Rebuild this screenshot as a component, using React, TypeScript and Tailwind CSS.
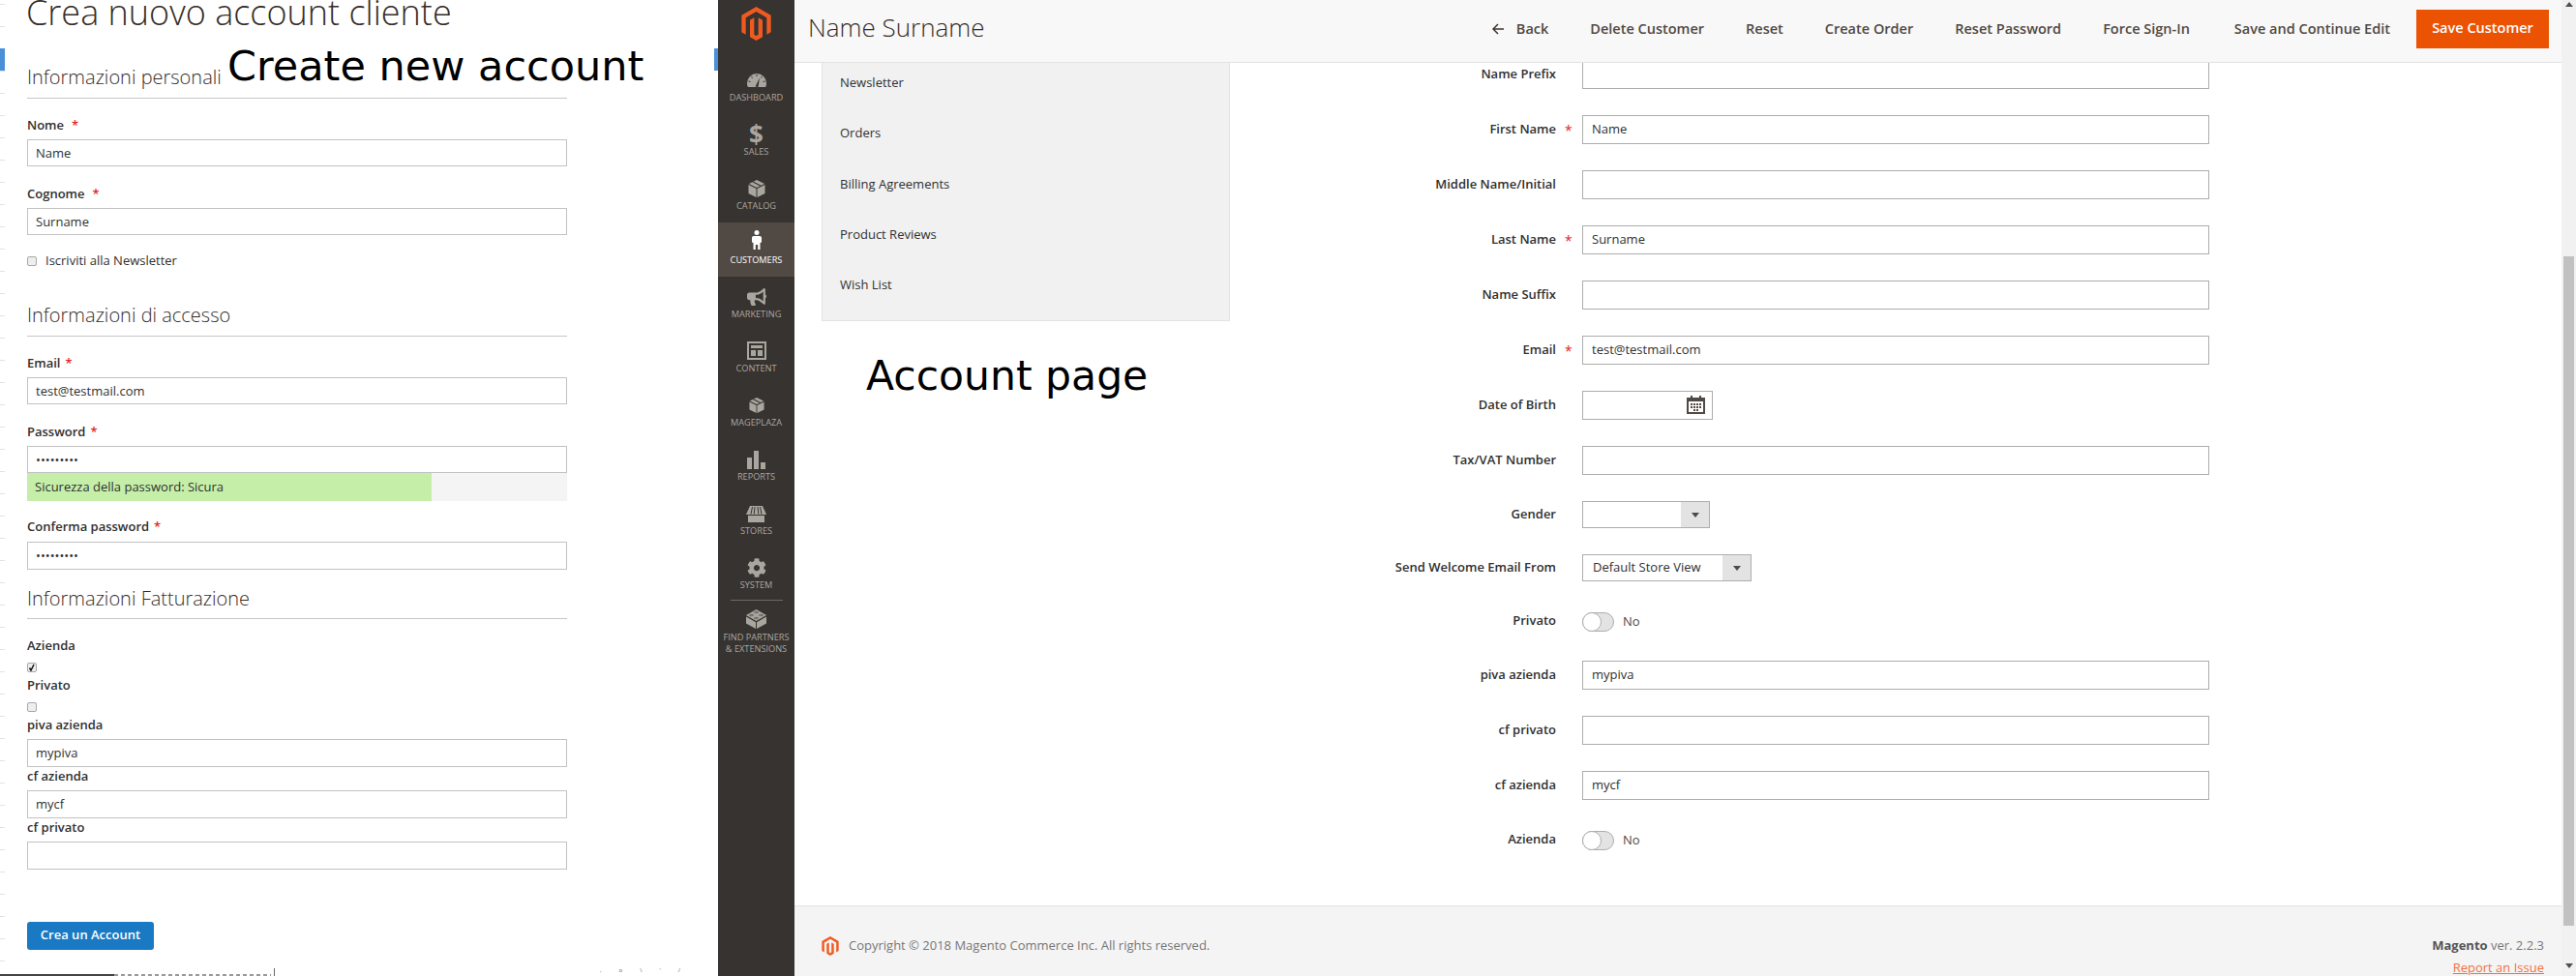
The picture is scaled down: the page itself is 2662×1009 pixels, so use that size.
import type { ReactNode } from 'react'
import { FaBullhorn, FaCog } from 'react-icons/fa'

const MAGENTO_PATH =
  'M12 24l-4.455-2.572v-12l2.97-1.715v12.001l1.485.902 1.485-.902V7.713l2.97 1.715v12L12 24zM22.391 6v12l-2.969 1.714V7.713L12 3.43 4.574 7.713v12L1.609 18V6L12 0l10.391 6z'

function MagentoLogo({ className }: { className: string }) {
  return (
    <svg viewBox="1.6 0 20.8 24" className={className}>
      <path d={MAGENTO_PATH} fill="currentColor" />
    </svg>
  )
}

function BoxIcon({ className }: { className: string }) {
  return (
    <svg viewBox="0 0 18 18" className={className}>
      <path d="M9 0l8 4-8 4-8-4z" fill="#a9a59f" />
      <path d="M5 2l8 4" stroke="#373330" strokeWidth="1.2" />
      <path d="M.5 5l8 4v9l-8-4z" fill="#a9a59f" />
      <path d="M17.500 5l-8 4v9l8-4z" fill="#a9a59f" />
    </svg>
  )
}

function GaugeIcon() {
  return (
    <svg viewBox="0 0 20 14" className="w-5 h-[14px]">
      <path d="M10 0A10 10 0 0 0 0 10c0 1.500.3 3 1 4h18c.7-1 1-2.500 1-4A10 10 0 0 0 10 0z" fill="#a9a59f" />
      <path d="M10 1v2M4.500 3l1 1.500M1.500 8l2 .5M15.500 3l-1 1.500M18.500 8l-2 .5" stroke="#373330" />
      <path d="M8.500 13.500L13 4.500l-1.500 9.500z" fill="#373330" />
    </svg>
  )
}

function PersonIcon() {
  return (
    <svg viewBox="0 0 10 20" className="-mt-[6px] w-[10px] h-5">
      <circle cx="5" cy="2.500" r="2.500" fill="#fff" />
      <path d="M2 6h6c1.200 0 2 .8 2 2v4.500L8.500 13v7H6.200v-5H3.800v5H1.500v-7L0 12.500V8c0-1.200.8-2 2-2z" fill="#fff" />
    </svg>
  )
}

function ContentIcon() {
  return (
    <svg viewBox="0 0 20 19" className="-mt-[2px] w-5 h-[19px]">
      <path d="M0 0h20v19H0zM2 2v15h16V2z" fill="#a9a59f" fillRule="evenodd" />
      <path d="M4 4h12v3H4zM4 9h5v6H4zM11 9h5v6h-5z" fill="#a9a59f" />
    </svg>
  )
}

function ReportsIcon() {
  return (
    <svg viewBox="0 0 19 19" className="w-[19px] h-[19px]">
      <path d="M0 7h5v12H0zM7 0h5v19H7zM14 12h5v7h-5z" fill="#a9a59f" />
    </svg>
  )
}

function StoreIcon() {
  return (
    <svg viewBox="0 0 21 17" className="w-[21px] h-[17px]">
      <path d="M4 0h13l4 9H0z" fill="#a9a59f" />
      <path d="M6.500 1L5 8.500M9 1l-.8 7.500M12 1l.8 7.500M14.500 1L16 8.500" stroke="#373330" strokeWidth="1" />
      <path d="M2 10h17v7H2z" fill="#a9a59f" />
    </svg>
  )
}

function BrickIcon() {
  return (
    <svg viewBox="0 0 21 20" className="w-[21px] h-5">
      <path d="M10.500 0L21 6l-10.500 6L0 6z" fill="#a9a59f" />
      <path d="M0 7.500l10 5.700V20L0 14.500zM21 7.500l-10 5.700V20l10-5.500z" fill="#a9a59f" />
      <ellipse cx="10.500" cy="3" rx="2.500" ry="1.200" fill="#373330" opacity=".45" />
      <ellipse cx="5.500" cy="6" rx="2.500" ry="1.200" fill="#373330" opacity=".45" />
      <ellipse cx="15.500" cy="6" rx="2.500" ry="1.200" fill="#373330" opacity=".45" />
      <ellipse cx="10.500" cy="9" rx="2.500" ry="1.200" fill="#373330" opacity=".45" />
    </svg>
  )
}

function CalendarIcon() {
  return (
    <svg viewBox="0 0 19 19" className="-mt-[2px] w-[19px] h-[19px]">
      <path d="M0 2h19v17H0z" fill="#514943" />
      <path d="M2 6h15v11H2z" fill="#fff" />
      <path d="M4 0h2v3H4zM13 0h2v3h-2z" fill="#514943" />
      <path d="M4 8h2v2H4zM7 8h2v2H7zM10 8h2v2h-2zM13 8h2v2h-2zM4 11h2v2H4zM7 11h2v2H7zM10 11h2v2h-2zM13 11h2v2h-2zM7 14h2v2H7zM10 14h2v2h-2z" fill="#514943" />
    </svg>
  )
}

const menu: { label: string; icon: ReactNode; active?: boolean }[] = [
  { label: 'Dashboard', icon: <GaugeIcon /> },
  { label: 'Sales', icon: <span className="text-[26px] font-bold leading-none text-[#a9a59f]">$</span> },
  { label: 'Catalog', icon: <BoxIcon className="w-[18px] h-[18px]" /> },
  { label: 'Customers', icon: <PersonIcon />, active: true },
  { label: 'Marketing', icon: <FaBullhorn className="w-5 h-[18px] text-[#a9a59f]" /> },
  { label: 'Content', icon: <ContentIcon /> },
  { label: 'Mageplaza', icon: <BoxIcon className="w-[16px] h-[16px]" /> },
  { label: 'Reports', icon: <ReportsIcon /> },
  { label: 'Stores', icon: <StoreIcon /> },
  { label: 'System', icon: <FaCog className="w-5 h-5 text-[#a9a59f]" /> },
]

function Star({ className = 'ml-[5px]' }: { className?: string }) {
  return <span className={`${className} text-[#e22626]`}>*</span>
}

function FieldLabel({ children, className }: { children: ReactNode; className: string }) {
  return <div className={`${className} text-[13px] font-semibold text-[#303030]`}>{children}</div>
}

function TextBox({ value = '', type = 'text', className }: { value?: string; type?: string; className: string }) {
  return (
    <input
      readOnly
      type={type}
      value={value}
      className={`${className} block w-[558px] border border-[#c2c2c2] bg-white px-2 pb-px text-[13px] text-[#303030] outline-none`}
    />
  )
}

function SectionTitle({ children, className }: { children: ReactNode; className: string }) {
  return (
    <div className={`${className} border-b border-[#c6c6c6] w-[558px] text-[20px] leading-[24px] font-light text-[#362d27]`}>
      {children}
    </div>
  )
}

function Check({ checked, className }: { checked?: boolean; className: string }) {
  return (
    <div className={`${className} w-[10px] h-[10px] rounded-[2px] border border-[#a8a8a8] bg-[#eeeeee] flex items-center justify-center`}>
      {checked && (
        <svg viewBox="0 0 8 8" className="w-2 h-2">
          <path d="M1.500 4.500L3 7l3-6" stroke="#111" strokeWidth="1.500" fill="none" />
        </svg>
      )}
    </div>
  )
}

function CreateAccount() {
  return (
    <div className="relative w-[742px] shrink-0 overflow-hidden bg-white pl-[28px]">
      <div className="absolute left-0 top-0 bottom-0 w-[5px] bg-[repeating-linear-gradient(to_bottom,transparent_0,transparent_4px,#e2e2e2_4px,#e2e2e2_5px,transparent_5px,transparent_23px)]" />
      <div className="absolute left-0 top-[50px] w-[5px] h-[23px] bg-[#4a90d9]" />
      <div className="absolute right-0 top-[50px] w-[4px] h-[23px] bg-[#4a90d9]" />

      <h1 className="-ml-px text-[36px] leading-[26px] font-light text-[#362d27] whitespace-nowrap">Crea nuovo account cliente</h1>
      <SectionTitle className="mt-[42px] pb-[9px]">Informazioni personali</SectionTitle>
      <div className="absolute left-[235px] top-[38px] text-[43px] leading-[60px] text-black font-['DejaVu_Sans',sans-serif]">Create new account</div>

      <FieldLabel className="mt-[17px] h-5 leading-5">Nome<Star className="ml-2" /></FieldLabel>
      <TextBox className="mt-[5px] h-[28px]" value="Name" />
      <FieldLabel className="mt-[18px] h-5 leading-5">Cognome<Star className="ml-2" /></FieldLabel>
      <TextBox className="mt-[5px] h-[28px]" value="Surname" />
      <div className="mt-[17px] h-5 flex items-center">
        <Check className="" />
        <span className="ml-[9px] text-[13px] text-[#303030]">Iscriviti alla Newsletter</span>
      </div>

      <SectionTitle className="mt-[34px] pb-[9px]">Informazioni di accesso</SectionTitle>
      <FieldLabel className="mt-[17px] h-5 leading-5">Email<Star /></FieldLabel>
      <TextBox className="mt-[5px] h-[28px]" value="test@testmail.com" />
      <FieldLabel className="mt-[18px] h-5 leading-5">Password<Star /></FieldLabel>
      <TextBox className="mt-[5px] h-[28px]" type="password" value="123456789" />
      <div className="w-[558px] h-[29px] bg-[#f4f4f4]">
        <div className="w-[418px] h-full bg-[#c5efa9] pl-2 text-[13px] leading-[28px] text-[#303030]">Sicurezza della password: Sicura</div>
      </div>
      <FieldLabel className="mt-[16px] h-5 leading-5">Conferma password<Star /></FieldLabel>
      <TextBox className="mt-[6px] h-[29px]" type="password" value="123456789" />

      <SectionTitle className="mt-[18px] pb-[8px]">Informazioni Fatturazione</SectionTitle>
      <FieldLabel className="mt-[17px] h-5 leading-5">Azienda</FieldLabel>
      <Check className="mt-[8px]" checked />
      <FieldLabel className="mt-[3px] h-5 leading-5">Privato</FieldLabel>
      <Check className="mt-[8px]" />
      <FieldLabel className="mt-[3px] h-5 leading-5">piva azienda</FieldLabel>
      <TextBox className="mt-[5px] h-[29px]" value="mypiva" />
      <FieldLabel className="h-[18px] leading-[18px]">cf azienda</FieldLabel>
      <TextBox className="mt-[6px] h-[29px]" value="mycf" />
      <FieldLabel className="h-[18px] leading-[18px]">cf privato</FieldLabel>
      <TextBox className="mt-[6px] h-[29px]" />
      <button className="mt-[54px] block h-[29px] w-[131px] rounded-[3px] bg-[#1979c3] pb-[2px] text-[13px] font-semibold text-white">Crea un Account</button>

      <div className="absolute left-0 bottom-0 w-[118px] h-[2px] bg-[#444444]" />
      <div className="absolute left-[118px] bottom-0 w-[162px] h-[2px] bg-[repeating-linear-gradient(to_right,#999999_0,#999999_4px,transparent_4px,transparent_7px)]" />
      <div className="absolute left-[283px] bottom-0 w-px h-2 bg-[#666666]" />
      <div className="absolute left-[620px] bottom-[3px] flex gap-[18px] text-[6px] leading-none text-[#666666]">
        <span>,</span><span>o</span><span>\</span><span>'</span><span>/</span>
      </div>
    </div>
  )
}

function Sidebar() {
  return (
    <aside className="w-[79px] shrink-0 bg-[#373330]">
      <div className="h-[62px] pt-[7px] flex justify-center">
        <MagentoLogo className="w-[31px] h-[35px] text-[#f05a1f]" />
      </div>
      {menu.map((item) => (
        <div key={item.label} className={`h-14 pt-[10px] flex flex-col items-center ${item.active ? 'bg-[#514943] text-white' : 'text-[#aaa6a0]'}`}>
          <div className="h-[22px] flex items-center justify-center">{item.icon}</div>
          <div className="mt-px text-[9.2px] leading-[12px] uppercase whitespace-nowrap">{item.label}</div>
        </div>
      ))}
      <div className="-mt-[2px] mx-auto w-[54px] h-px bg-[#6f6a65]" />
      <div className="pt-[9px] flex flex-col items-center text-[#aaa6a0]">
        <BrickIcon />
        <div className="mt-[3px] text-[9.2px] leading-[12px] uppercase text-center whitespace-nowrap">Find Partners<br />&amp; Extensions</div>
      </div>
    </aside>
  )
}

function FormRow({ label, required, height = 'h-[30px]', children }: { label: string; required?: boolean; height?: string; children: ReactNode }) {
  return (
    <div className={`${height} flex items-center`}>
      <div className="-mt-px w-[337px] text-right text-[13px] font-semibold text-[#303030] whitespace-nowrap">{label}</div>
      <div className="w-[27px] pl-[9px] text-[14px] text-[#e22626]">{required ? '*' : ''}</div>
      {children}
    </div>
  )
}

function FormInput({ value = '' }: { value?: string }) {
  return (
    <input
      readOnly
      value={value}
      className="w-[648px] h-[30px] border border-[#adadad] bg-white px-[9px] pb-[2px] text-[13px] text-[#303030] outline-none"
    />
  )
}

function SelectBox({ width, value }: { width: string; value?: string }) {
  return (
    <div className={`${width} h-[28px] border border-[#adadad] bg-white flex`}>
      <div className="flex-1 pl-[10px] text-[13px] leading-[25px] text-[#303030] whitespace-nowrap">{value}</div>
      <div className="w-[29px] bg-[#e3e3e3] flex items-center justify-center">
        <div className="w-0 h-0 border-x-[4px] border-x-transparent border-t-[5px] border-t-[#514943]" />
      </div>
    </div>
  )
}

function Toggle() {
  return (
    <div className="mt-[2px] flex items-center">
      <div className="relative w-[33px] h-5 rounded-full border border-[#adadad] bg-[#e3e3e3]">
        <div className="absolute -left-px -top-px w-5 h-5 rounded-full border border-[#adadad] bg-white" />
      </div>
      <span className="ml-[9px] text-[13px] text-[#514943]">No</span>
    </div>
  )
}

const sideLinks = ['Newsletter', 'Orders', 'Billing Agreements', 'Product Reviews', 'Wish List']

function AccountPage() {
  return (
    <div className="flex-1 flex min-w-0">
      <div className="flex-1 flex flex-col min-w-0">
        <header className="relative z-10 h-[65px] shrink-0 border-b border-[#e3e3e3] bg-[#f8f8f8] pl-[14px] pr-[13px] flex items-center">
          <h2 className="-mt-[8px] text-[26px] font-light text-[#362d27]">Name Surname</h2>
          <div className="-mt-[5px] ml-auto flex items-center gap-[43px] text-[14.500px] font-semibold text-[#514943]">
            <span className="flex items-center gap-[13px]">
              <svg viewBox="0 0 12 12" className="w-3 h-3">
                <path d="M6 1L1 6l5 5M1 6h11" stroke="#41362f" strokeWidth="1.500" fill="none" />
              </svg>
              Back
            </span>
            <span>Delete Customer</span>
            <span>Reset</span>
            <span>Create Order</span>
            <span>Reset Password</span>
            <span>Force Sign-In</span>
            <span className="ml-[3px] -mr-[16px]">Save and Continue Edit</span>
            <button className="h-10 w-[137px] bg-[#eb5202] pb-px text-white font-semibold">Save Customer</button>
          </div>
        </header>
        <div className="relative flex-1 flex min-h-0">
          <div className="absolute left-[74px] top-[301px] text-[42.500px] leading-[46px] text-black font-['DejaVu_Sans',sans-serif]">Account page</div>
          <nav className="ml-[28px] w-[422px] h-[267px] border-x border-b border-[#e3e3e3] bg-[#f1f1f1] pl-[18px] pt-[9px]">
            {sideLinks.map((link) => (
              <div key={link} className="h-[52.300px] leading-[22px] text-[13px] text-[#303030]">{link}</div>
            ))}
          </nav>
          <div className="-mt-[3px] flex flex-col gap-[27px]">
            <FormRow label="Name Prefix"><FormInput /></FormRow>
            <FormRow label="First Name" required><FormInput value="Name" /></FormRow>
            <FormRow label="Middle Name/Initial"><FormInput /></FormRow>
            <FormRow label="Last Name" required><FormInput value="Surname" /></FormRow>
            <FormRow label="Name Suffix"><FormInput /></FormRow>
            <FormRow label="Email" required><FormInput value="test@testmail.com" /></FormRow>
            <FormRow label="Date of Birth">
              <div className="w-[135px] h-[30px] border border-[#adadad] bg-white flex items-center justify-end pr-[7px]">
                <CalendarIcon />
              </div>
            </FormRow>
            <FormRow label="Tax/VAT Number"><FormInput /></FormRow>
            <FormRow label="Gender" height="h-[28px]"><SelectBox width="w-[132px]" /></FormRow>
            <FormRow label="Send Welcome Email From" height="h-[28px]"><SelectBox width="w-[175px]" value="Default Store View" /></FormRow>
            <FormRow label="Privato" height="h-[28px]"><Toggle /></FormRow>
            <FormRow label="piva azienda"><FormInput value="mypiva" /></FormRow>
            <FormRow label="cf privato"><FormInput /></FormRow>
            <FormRow label="cf azienda"><FormInput value="mycf" /></FormRow>
            <FormRow label="Azienda" height="h-[28px]"><Toggle /></FormRow>
          </div>
        </div>
        <footer className="h-[73px] shrink-0 border-t border-[#e3e3e3] bg-[#f4f4f4] pl-[28px] pr-[18px] flex justify-between text-[13px] text-[#777777]">
          <div className="mt-[31px] h-5 flex items-center">
            <MagentoLogo className="w-[18px] h-5 text-[#f15a22]" />
            <span className="ml-[10px]">Copyright © 2018 Magento Commerce Inc. All rights reserved.</span>
          </div>
          <div className="mt-[29px] text-right leading-[23px]">
            <div><b className="text-[#555555]">Magento</b> ver. 2.2.3</div>
            <a className="text-[#f4703f] underline">Report an Issue</a>
          </div>
        </footer>
      </div>
      <div className="w-[15px] shrink-0 bg-[#f1f1f1] flex flex-col items-center">
        <div className="mt-[2px] w-0 h-0 border-x-[4px] border-x-transparent border-b-[5px] border-b-[#505050]" />
        <div className="mt-[258px] w-[11px] h-[692px] bg-[#c1c1c1]" />
        <div className="mt-[39px] w-0 h-0 border-x-[4px] border-x-transparent border-t-[5px] border-t-[#505050]" />
      </div>
    </div>
  )
}

export default function App() {
  return (
    <div className="flex h-[1009px] w-[2662px] overflow-hidden bg-white font-['Open_Sans',sans-serif]">
      <CreateAccount />
      <Sidebar />
      <AccountPage />
    </div>
  )
}
